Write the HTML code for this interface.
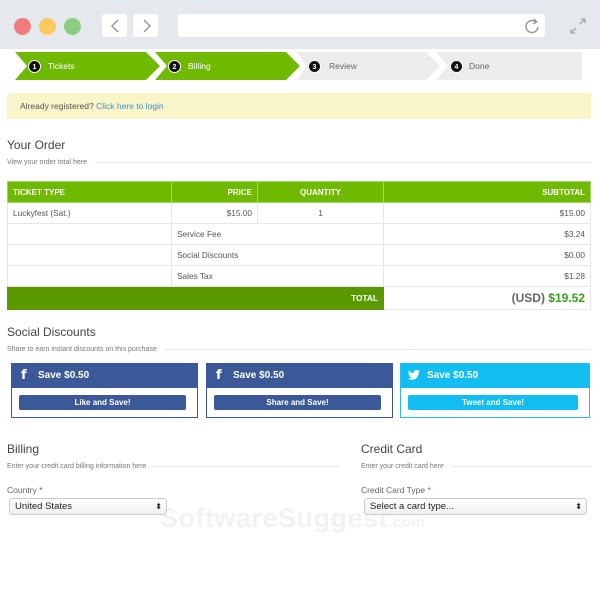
<!DOCTYPE html>
<html><head><meta charset="utf-8"><style>
*{margin:0;padding:0;box-sizing:border-box}
body{width:600px;height:600px;background:#fff;position:relative;overflow:hidden;font-family:"Liberation Sans",sans-serif;color:#555}
.a{position:absolute}
.dot{position:absolute;top:18px;width:17px;height:17px;border-radius:50%}
.nb{position:absolute;top:14px;width:25px;height:23px;background:#fff;border-radius:3px}
.num{position:absolute;top:8px;width:13px;height:13px;border-radius:50%;background:#111;color:#fff;font-size:7px;font-weight:bold;text-align:center;line-height:13px;border:1px solid #fff}
.st{position:absolute;top:9px;font-size:8.5px}
.h{font-size:12px;color:#444}
.sub{font-size:7px;color:#777;display:flex;align-items:center}
.sub:after{content:"";flex:1;border-top:1px solid #e8e8e8;margin-left:8px}
table{border-collapse:collapse;position:absolute;left:7px;top:181px;width:584px;font-size:8.3px}
td{border:1px solid #e6e6e6;height:21px;padding:0 5px;color:#555}
th{background:#6fba00;color:#fff;height:21px;font-size:8px;padding:0 5px;border:1px solid #a3d66a}
.card{position:absolute;top:363px;height:55px;border:1px solid #3b5998}
.card .hd{height:24px;background:#3b5998;color:#fff;font-weight:bold;font-size:10px;line-height:24px;padding-left:26px;position:relative}
.card .hd i{position:absolute;left:9px;top:0;font-style:normal;font-size:13px;font-family:"DejaVu Sans",sans-serif}
.card .bt{position:absolute;left:7px;right:11px;top:31px;height:15px;background:#3b5998;color:#fff;font-weight:bold;font-size:8px;text-align:center;line-height:15px;border-radius:2px}
.sel{position:absolute;height:17px;border:1px solid #ccc;border-radius:3px;background:linear-gradient(#fff,#f0f0f0);font-size:9.5px;color:#222;line-height:15px;padding-left:5px}
.sel:after{content:"⬍";position:absolute;right:4px;top:0;font-size:8px;font-family:"DejaVu Sans",sans-serif}
.lab{font-size:8.5px;color:#666}
.lab b{color:#d33;font-weight:normal}
</style></head><body>
<div class="a" style="left:0;top:0;width:600px;height:49px;background:#e5e9ee"></div>
<div class="dot" style="left:14px;background:#f07d7d"></div>
<div class="dot" style="left:39px;background:#f9cb5c"></div>
<div class="dot" style="left:64px;background:#8ccc82"></div>
<div class="nb" style="left:102px"></div><div class="nb" style="left:133px"></div>
<svg class="a" style="left:102px;top:14px" width="60" height="23"><path d="M16 6 L10 12 L16 18" fill="none" stroke="#999" stroke-width="1.5"/><path d="M42 6 L48 12 L42 18" fill="none" stroke="#999" stroke-width="1.5"/></svg>
<div class="a" style="left:178px;top:14px;width:367px;height:23px;background:#fff;border-radius:3px"></div>
<svg class="a" style="left:522px;top:16px" width="20" height="20"><path d="M14 6 A6 6 0 1 0 16 11" fill="none" stroke="#999" stroke-width="1.5"/><path d="M12 3 L15 6 L11 8" fill="none" stroke="#999" stroke-width="1.3"/></svg>
<svg class="a" style="left:568px;top:16px" width="20" height="20"><path d="M3 17 L8 12 M3 17 L3 13 M3 17 L7 17 M17 3 L12 8 M17 3 L13 3 M17 3 L17 7" fill="none" stroke="#aaa" stroke-width="1.5"/></svg>

<svg class="a" style="left:0;top:52px" width="600" height="28">
<polygon points="15,0 146,0 160,14 146,28 15,28 27,14" fill="#6fba00"/>
<polygon points="155,0 286,0 300,14 286,28 155,28 167,14" fill="#6fba00"/>
<polygon points="297,0 426,0 440,14 426,28 297,28 306,14" fill="#ececec"/>
<polygon points="436,0 582,0 582,28 436,28 448,14" fill="#ececec"/>
</svg>
<div class="num" style="left:28px;top:60px">1</div><div class="st" style="left:48px;top:61px;color:#fff">Tickets</div>
<div class="num" style="left:168px;top:60px">2</div><div class="st" style="left:188px;top:61px;color:#fff">Billing</div>
<div class="num" style="left:308px;top:60px">3</div><div class="st" style="left:329px;top:61px;color:#666">Review</div>
<div class="num" style="left:450px;top:60px">4</div><div class="st" style="left:469px;top:61px;color:#666">Done</div>

<div class="a" style="left:7px;top:93px;width:584px;height:26px;background:#f8f6c8;font-size:8.5px;line-height:26px;padding-left:13px;color:#555">Already registered? <span style="color:#3a8fd0">Click here to login</span></div>

<div class="a h" style="left:7px;top:138px">Your Order</div>
<div class="a sub" style="left:7px;top:159px;width:584px">View your order total here</div>
<table>
<tr><th style="width:164px;text-align:left">TICKET TYPE</th><th style="width:86px;text-align:right">PRICE</th><th style="width:126px">QUANTITY</th><th style="text-align:right">SUBTOTAL</th></tr>
<tr><td>Luckyfest (Sat.)</td><td style="text-align:right">$15.00</td><td style="text-align:center">1</td><td style="text-align:right">$15.00</td></tr>
<tr><td></td><td colspan="2">Service Fee</td><td style="text-align:right">$3.24</td></tr>
<tr><td></td><td colspan="2">Social Discounts</td><td style="text-align:right">$0.00</td></tr>
<tr><td></td><td colspan="2">Sales Tax</td><td style="text-align:right">$1.28</td></tr>
<tr><td colspan="3" style="background:#5a9a00;color:#fff;font-weight:bold;text-align:right;height:23px;border-color:#5a9a00">TOTAL</td><td style="text-align:right;font-size:12px;font-weight:bold;color:#666">(USD) <span style="color:#3aa01a">$19.52</span></td></tr>
</table>

<div class="a h" style="left:7px;top:325px">Social Discounts</div>
<div class="a sub" style="left:7px;top:346px;width:584px">Share to earn instant discounts on this purchase</div>
<div class="card" style="left:11px;width:187px"><div class="hd"><i>f</i>Save $0.50</div><div class="bt">Like and Save!</div></div>
<div class="card" style="left:206px;width:187px"><div class="hd"><i>f</i>Save $0.50</div><div class="bt">Share and Save!</div></div>
<div class="card" style="left:400px;width:190px;border-color:#2ab8ee"><div class="hd" style="background:#12bdf2"><svg style="position:absolute;left:7px;top:6px" width="12" height="10" viewBox="0 0 24 20"><path fill="#fff" d="M24 2.4a10 10 0 0 1-2.8.8A5 5 0 0 0 23.3.4a10 10 0 0 1-3.1 1.2A4.9 4.9 0 0 0 11.8 6 14 14 0 0 1 1.7.9a4.9 4.9 0 0 0 1.5 6.6A4.9 4.9 0 0 1 1 6.9a4.9 4.9 0 0 0 3.9 4.8 5 5 0 0 1-2.2.1 4.9 4.9 0 0 0 4.6 3.4A9.9 9.9 0 0 1 0 17.3 14 14 0 0 0 7.5 19.5c9.1 0 14-7.5 14-14v-.6A10 10 0 0 0 24 2.4z"/></svg>Save $0.50</div><div class="bt" style="background:#12bdf2">Tweet and Save!</div></div>

<div class="a" style="left:160px;top:503px;font-size:27px;font-weight:bold;color:#f2f2f2;letter-spacing:0.5px">SoftwareSuggest<span style="font-size:15px">.com</span></div>

<div class="a h" style="left:7px;top:442px">Billing</div>
<div class="a sub" style="left:7px;top:463px;width:332px">Enter your credit card billing information here</div>
<div class="a lab" style="left:7px;top:485px">Country <b>*</b></div>
<div class="sel" style="left:9px;top:498px;width:158px">United States</div>

<div class="a h" style="left:361px;top:442px">Credit Card</div>
<div class="a sub" style="left:361px;top:463px;width:230px">Enter your credit card here</div>
<div class="a lab" style="left:361px;top:485px">Credit Card Type <b>*</b></div>
<div class="sel" style="left:364px;top:498px;width:223px">Select a card type...</div>
</body></html>
